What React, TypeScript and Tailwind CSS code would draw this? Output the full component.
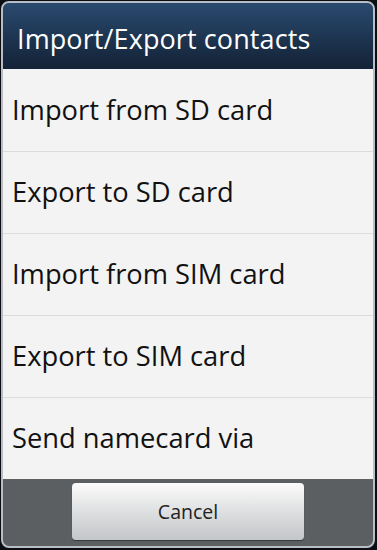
export default function App() {
  const items = ['Import from SD card', 'Export to SD card', 'Import from SIM card', 'Export to SIM card', 'Send namecard via']

  return (
    <div className="h-[550px] w-[377px] bg-[#0b0f14] p-[1px] pb-[2px] pr-[2px]" style={{ fontFamily: '"Open Sans", "Noto Sans", sans-serif' }}>
      <div className="flex h-full flex-col overflow-hidden rounded-[8px] border-2 border-[#b9bec4] bg-[#5c5f62]">
        <div className="flex h-[66px] shrink-0 items-center bg-gradient-to-b from-[#2a4b70] to-[#132236] px-[14px] pt-[4px]">
          <span className="text-[27px] leading-none tracking-[0.1px] text-white">Import/Export contacts</span>
        </div>
        <ul className="bg-[#f3f3f3]">
          {items.map((label, i) => (
            <li
              key={label}
              className={`flex h-[82px] items-center px-[9px] text-[27.3px] text-[#111] ${i > 0 ? 'border-t border-[#dcdcdc]' : ''}`}
            >
              {label}
            </li>
          ))}
        </ul>
        <div className="flex flex-1 items-center justify-center pb-[2px]">
          <button
            type="button"
            className="h-[57px] w-[232px] rounded-[4px] bg-gradient-to-b from-[#fbfbfb] to-[#c3c5c8] text-[19.5px] text-[#222] shadow-[0_1px_1px_rgba(0,0,0,0.4)]"
          >
            Cancel
          </button>
        </div>
      </div>
    </div>
  )
}
